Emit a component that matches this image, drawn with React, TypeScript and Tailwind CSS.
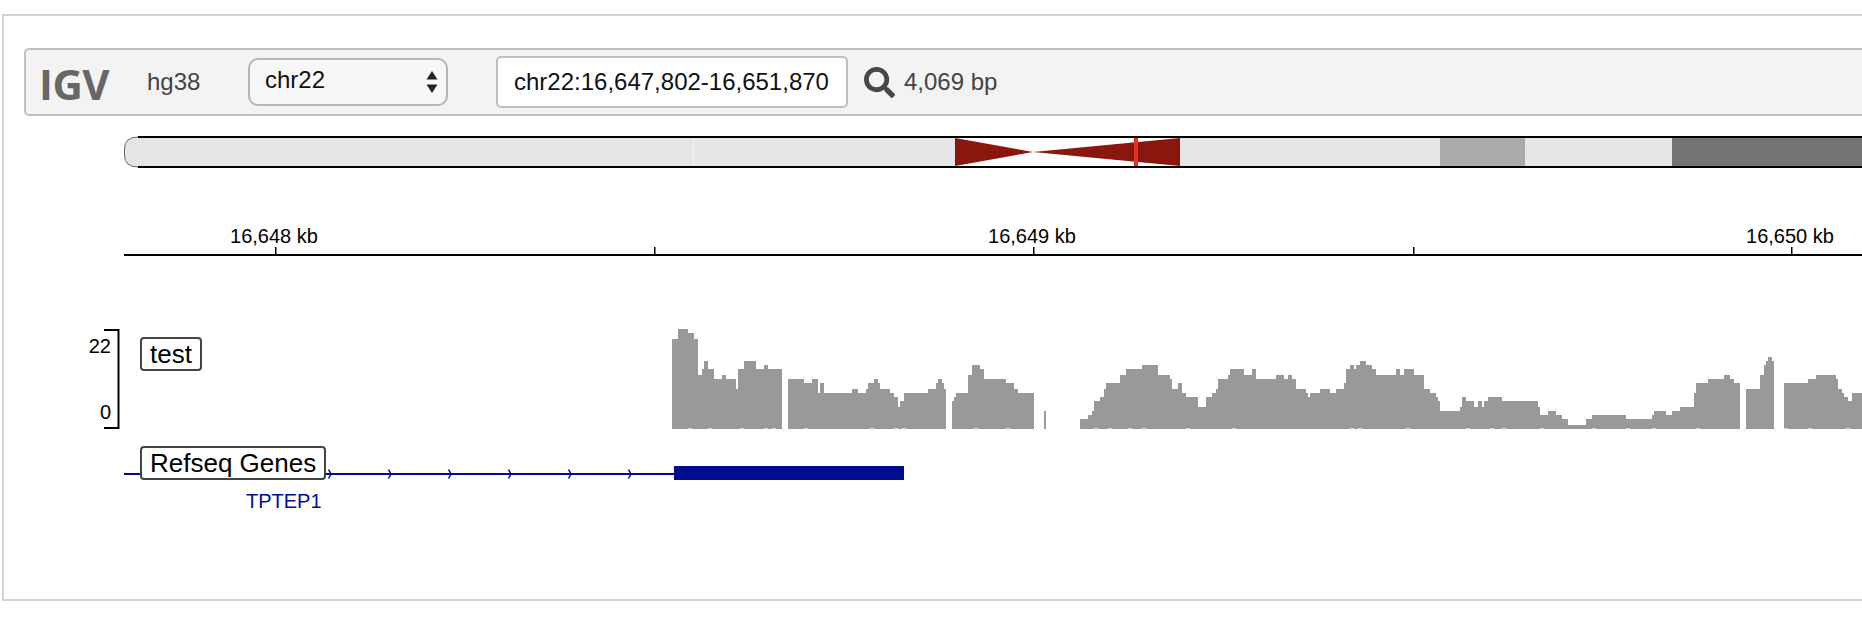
import React from "react";
import { FaSearch } from "react-icons/fa";

// coverage bins: [x, top y] in page pixels, last entry of a run gives the end x
const COVERAGE: [number, number][][] = [
    [[672, 338], [678, 328], [688, 332], [694, 338], [698, 374], [702, 368], [704, 360], [708, 368], [714, 378], [722, 374], [726, 378], [736, 388], [738, 368], [744, 360], [756, 368], [764, 364], [768, 368], [782, 0]],
    [[788, 378], [804, 382], [812, 378], [818, 392], [820, 382], [824, 392], [852, 388], [858, 392], [866, 388], [868, 382], [874, 378], [878, 382], [880, 388], [890, 392], [894, 396], [898, 406], [900, 400], [904, 392], [928, 388], [936, 382], [938, 378], [942, 382], [944, 388], [946, 0]],
    [[952, 400], [954, 396], [956, 392], [968, 374], [972, 364], [980, 368], [984, 378], [1006, 382], [1014, 388], [1018, 392], [1034, 0]],
    [[1044, 410], [1046, 0]],
    [[1080, 418], [1088, 414], [1092, 410], [1094, 400], [1100, 396], [1104, 388], [1106, 382], [1120, 374], [1126, 368], [1142, 364], [1158, 374], [1170, 378], [1172, 388], [1178, 382], [1182, 392], [1186, 396], [1198, 406], [1206, 396], [1212, 392], [1216, 388], [1218, 378], [1228, 374], [1230, 368], [1244, 374], [1252, 368], [1256, 378], [1276, 374], [1284, 378], [1288, 374], [1292, 378], [1296, 388], [1306, 392], [1308, 396], [1310, 392], [1320, 388], [1330, 392], [1336, 388], [1344, 382], [1346, 368], [1350, 364], [1354, 368], [1356, 364], [1360, 360], [1366, 364], [1372, 368], [1376, 374], [1396, 368], [1400, 374], [1404, 368], [1414, 374], [1424, 388], [1430, 392], [1436, 396], [1438, 400], [1440, 410], [1460, 406], [1462, 396], [1466, 400], [1474, 406], [1478, 400], [1482, 406], [1484, 400], [1488, 396], [1502, 400], [1538, 406], [1540, 414], [1548, 410], [1556, 414], [1562, 418], [1568, 424], [1586, 418], [1592, 414], [1626, 418], [1652, 414], [1654, 410], [1666, 414], [1672, 410], [1680, 406], [1694, 392], [1696, 382], [1708, 378], [1724, 374], [1730, 378], [1734, 382], [1740, 0]],
    [[1746, 388], [1760, 374], [1764, 364], [1766, 360], [1768, 356], [1772, 360], [1774, 0]],
    [[1784, 382], [1808, 378], [1816, 374], [1836, 378], [1838, 388], [1842, 392], [1844, 396], [1848, 400], [1852, 392], [1862, 0]],
];

// lighter slivers along the bottom of the coverage
const SLIVERS = [688, 708, 740, 764, 772, 804, 870, 894, 902, 974, 1006, 1094, 1108, 1128, 1142, 1186, 1232, 1350, 1358, 1406, 1466, 1490, 1502, 1540, 1592, 1626, 1652, 1696, 1784, 1808, 1846];

const TICKS = [275, 654, 1033, 1413, 1791];
const TICK_LABELS = [
    { x: 270, label: "16,648 kb" },
    { x: 1028, label: "16,649 kb" },
    { x: 1786, label: "16,650 kb" },
];
const GENE_ARROWS = [330, 390, 450, 510, 570, 630];

function runPath(run: [number, number][]) {
    const base = 428;
    let d = `M${run[0][0]} ${base}`;
    run.forEach(([x, y], i) => {
        if (i === run.length - 1) {
            d += ` H${x} V${base} Z`;
        } else {
            d += ` H${x} V${y}`;
        }
    });
    return d;
}

export default function App() {
    return (
        <div className="w-[1862px] h-[630px] overflow-hidden bg-white font-['Liberation_Sans',sans-serif]">
            <div className="mt-[14px] ml-[2px] w-[1900px] h-[587px] pt-[32px] border-2 border-[#d3d3d3]">
                {/* navbar */}
                <div className="ml-[20px] w-[1880px] h-[68px] flex items-center bg-[#f3f3f3] border-2 border-[#bfbfbf] rounded-[5px]">
                    <div className="w-[121px] pl-[13px] pt-[4px] font-['Open_Sans',sans-serif] font-bold text-[42px] leading-none tracking-[-0.5px] text-[#676767]">
                        IGV
                    </div>
                    <div className="w-[101px] text-[24px] leading-none text-[#444]">hg38</div>
                    <div className="w-[200px] h-[48px] flex items-center justify-between pl-[15px] pr-[8px] bg-[#f7f7f7] border-2 border-[#b5b5b5] rounded-[10px] text-[24px] text-[#111]">
                        <span className="-mt-[4px]">chr22</span>
                        <svg width="12" height="22" viewBox="0 0 12 22">
                            <path d="M6 0L11.5 8.5H.5Z M.5 13.5H11.5L6 22Z" fill="#222" />
                        </svg>
                    </div>
                    <div className="ml-[48px] w-[352px] h-[52px] flex items-center pl-[16px] bg-white border-2 border-[#bfbfbf] rounded-[5px] text-[24px] text-[#111] whitespace-nowrap">
                        chr22:16,647,802-16,651,870
                    </div>
                    <FaSearch className="ml-[16px] text-[31px] text-[#484848]" />
                    <div className="ml-[9px] text-[24px] text-[#444] whitespace-nowrap">4,069 bp</div>
                </div>

                {/* ideogram */}
                <svg className="block mt-[20px] ml-[120px]" width="1738" height="32" viewBox="124 136 1738 32">
                    <path d="M138 137H1862V167H138Q124.500 167 124.500 155V149Q124.500 137 138 137Z" fill="#e6e6e6" />
                    <rect x="693" y="137" width="1" height="30" fill="#f2f2f2" />
                    <rect x="955" y="137" width="225" height="30" fill="#fff" />
                    <path d="M955 138V166L1033 152Z M1180 138V166L1033 152Z" fill="#8a170e" />
                    <rect x="1134" y="137" width="4" height="30" fill="#e6321e" />
                    <rect x="1440" y="138" width="85" height="28" fill="#aaaaaa" />
                    <rect x="1672" y="138" width="190" height="28" fill="#747474" />
                    <path d="M138 137H1862M138 167H1862" stroke="#000" strokeWidth="2" fill="none" />
                    <path d="M138 137Q124.500 137 124.500 149V155Q124.500 167 138 167" stroke="#666" strokeWidth="1" fill="none" />
                </svg>

                {/* ruler */}
                <div className="relative mt-[56px] h-[33px]">
                    <svg className="block" width="1858" height="33" viewBox="4 224 1858 33">
                        <rect x="124" y="254" width="1738" height="2" fill="#000" />
                        {TICKS.map((x) => (
                            <rect key={x} x={x} y="247" width="1.500" height="8" fill="#000" />
                        ))}
                    </svg>
                    {TICK_LABELS.map((t) => (
                        <div key={t.x} className="absolute top-0 -translate-x-1/2 text-[20px] leading-6 text-black whitespace-nowrap" style={{ left: t.x }}>
                            {t.label}
                        </div>
                    ))}
                </div>

                {/* coverage track */}
                <div className="relative mt-[70px] h-[104px]">
                    <svg className="block" width="1858" height="104" viewBox="4 326 1858 104">
                        <path d="M104 329H118.500V427H104" stroke="#000" strokeWidth="2" fill="none" />
                        {COVERAGE.map((run, i) => (
                            <path key={i} d={runPath(run)} fill="#999999" />
                        ))}
                        {SLIVERS.map((x) => (
                            <rect key={x} x={x} y="427" width="4" height="1" fill="#d9d9d9" />
                        ))}
                    </svg>
                    <div className="absolute left-[77px] top-[7px] w-[30px] text-right text-[20px] leading-6 text-black">22</div>
                    <div className="absolute left-[77px] top-[73px] w-[30px] text-right text-[20px] leading-6 text-black">0</div>
                    <div className="absolute left-[136px] top-[10px] h-[34px] flex items-center px-[8px] bg-white border-2 border-[#444] rounded-[4px] text-[26px] text-black">
                        test
                    </div>
                </div>

                {/* gene track */}
                <div className="relative mt-[10px] h-[70px]">
                    <svg className="block" width="1858" height="70" viewBox="4 440 1858 70">
                        <rect x="124" y="472" width="550" height="2" fill="#000c8f" />
                        {GENE_ARROWS.map((x) => (
                            <path key={x} d={`M${x - 1.5} 468.500L${x + 1} 473L${x - 1.5} 477.500`} stroke="#000c8f" strokeWidth="1.500" fill="none" />
                        ))}
                        <rect x="674" y="465" width="230" height="14" fill="#000c8f" />
                    </svg>
                    <div className="absolute left-[136px] top-[5px] h-[34px] flex items-center px-[8px] bg-white border-2 border-[#444] rounded-[4px] text-[26px] text-black whitespace-nowrap">
                        Refseq Genes
                    </div>
                    <div className="absolute left-[242px] top-[48px] text-[20px] leading-6 text-[#000c8f]">TPTEP1</div>
                </div>
            </div>
        </div>
    );
}
